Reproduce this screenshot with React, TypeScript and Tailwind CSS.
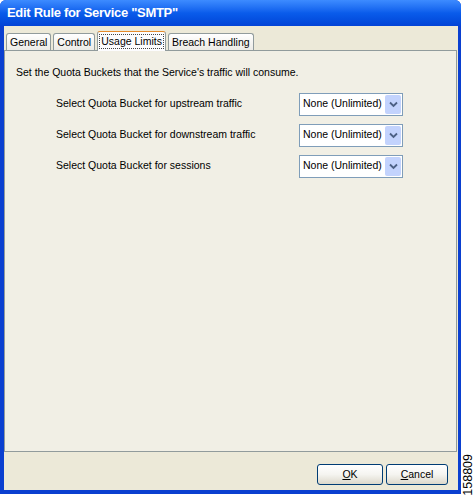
import React from "react";

const font = { fontFamily: '"Liberation Sans", Arial, sans-serif' };

function Tab({ label, active }: { label: string; active?: boolean }) {
  if (active) {
    return (
      <div className="relative z-10 -mb-px flex h-[20px] items-start rounded-t-[3px] border border-b-0 border-[#919B9C] border-t-[#E68B2C] bg-[#FCFCFE] px-[1px] pt-[2px]">
        <span className="whitespace-nowrap border border-dotted border-[#444] px-[1px] leading-[13px]">{label}</span>
      </div>
    );
  }
  return (
    <div className="mt-[3px] flex h-[17px] items-center whitespace-nowrap rounded-t-[3px] border border-b-0 border-[#919B9C] bg-gradient-to-b from-white to-[#ECEBE6] px-[3px] leading-[13px]">
      {label}
    </div>
  );
}

function Select() {
  return (
    <div className="flex h-[23px] w-[104px] items-stretch border border-[#7F9DB9] bg-white p-[1px]">
      <div className="flex flex-1 items-center whitespace-nowrap pl-[2px] text-[10.5px] text-black">None (Unlimited)</div>
      <div className="flex w-[16px] items-center justify-center rounded-[2px] bg-[#C3D3FD]">
        <svg width="9" height="7" viewBox="0 0 9 7">
          <path d="M1 1.5 L4.5 5 L8 1.5" fill="none" stroke="#4D6185" strokeWidth="1.8" />
        </svg>
      </div>
    </div>
  );
}

function Row({ label }: { label: string }) {
  return (
    <div className="flex items-center">
      <div className="w-[243px] text-[10.5px]">{label}</div>
      <Select />
    </div>
  );
}

function Button({ children, w }: { children: React.ReactNode; w: string }) {
  return (
    <div
      className={`flex h-[21px] ${w} items-center justify-center rounded-[3px] border border-[#003C74] bg-gradient-to-b from-white via-[#F5F4F0] to-[#DCD8CB] text-[10.5px]`}
    >
      {children}
    </div>
  );
}

export default function App() {
  return (
    <div className="flex h-[498px] w-[474px] bg-white text-black" style={font}>
      <div className="flex h-[494px] w-[461px] flex-col rounded-t-[6px] bg-[#0A3FD0]">
        <div className="flex h-[26px] items-center rounded-t-[6px] bg-gradient-to-b from-[#3D8BFF] via-[#0A5CEB] to-[#0343D6] pl-[7px]">
          <span className="text-[13px] font-bold tracking-[-0.3px] text-white">Edit Rule for Service "SMTP"</span>
        </div>
        <div className="mb-[4px] ml-[4px] mr-[3px] flex flex-1 flex-col bg-[#ECE9D8] text-[10.5px]">
          <div className="flex items-end gap-[2px] pl-[2px] pt-[4px]">
            <Tab label="General" />
            <Tab label="Control" />
            <Tab label="Usage Limits" active />
            <Tab label="Breach Handling" />
          </div>
          <div className="mr-[1px] h-[402px] border border-[#919B9C] bg-[#F1EFE5] pl-[11px] pt-[14px]">
            <div className="text-[10.5px]">Set the Quota Buckets that the Service's traffic will consume.</div>
            <div className="ml-[40px] mt-[12px] flex flex-col gap-[8px]">
              <Row label="Select Quota Bucket for upstream traffic" />
              <Row label="Select Quota Bucket for downstream traffic" />
              <Row label="Select Quota Bucket for sessions" />
            </div>
          </div>
          <div className="flex justify-end gap-[3px] pr-[10px] pt-[12px]">
            <Button w="w-[66px]">
              <span className="underline">O</span>K
            </Button>
            <Button w="w-[62px]">
              <span className="underline">C</span>ancel
            </Button>
          </div>
        </div>
      </div>
      <div className="flex flex-1 flex-col items-center justify-end pb-[2px]">
        <span className="rotate-180 text-[12.5px] leading-[12px] text-black [writing-mode:vertical-rl]">158809</span>
      </div>
    </div>
  );
}
